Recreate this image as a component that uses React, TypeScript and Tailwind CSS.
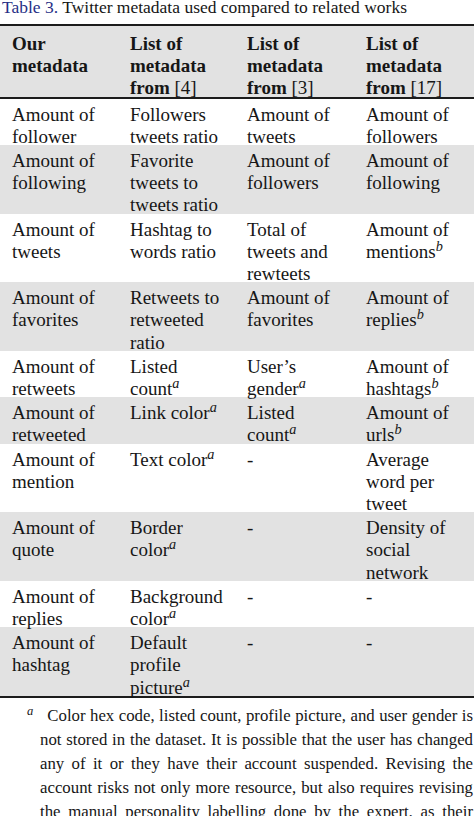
import React from 'react'

type Cell = React.ReactNode[]

const Sup = ({ children }: { children: React.ReactNode }) => (
  <sup className="italic">{children}</sup>
)

const header: Cell[] = [
  ['Our', 'metadata'],
  ['List of', 'metadata', <>from <span className="font-normal">[4]</span></>],
  ['List of', 'metadata', <>from <span className="font-normal">[3]</span></>],
  ['List of', 'metadata', <>from <span className="font-normal">[17]</span></>],
]

const rows: Cell[][] = [
  [['Amount of', 'follower'], ['Followers', 'tweets ratio'], ['Amount of', 'tweets'], ['Amount of', 'followers']],
  [['Amount of', 'following'], ['Favorite', 'tweets to', 'tweets ratio'], ['Amount of', 'followers'], ['Amount of', 'following']],
  [['Amount of', 'tweets'], ['Hashtag to', 'words ratio'], ['Total of', 'tweets and', 'rewteets'], ['Amount of', <>mentions<Sup>b</Sup></>]],
  [['Amount of', 'favorites'], ['Retweets to', 'retweeted', 'ratio'], ['Amount of', 'favorites'], ['Amount of', <>replies<Sup>b</Sup></>]],
  [['Amount of', 'retweets'], ['Listed', <>count<Sup>a</Sup></>], ['User’s', <>gender<Sup>a</Sup></>], ['Amount of', <>hashtags<Sup>b</Sup></>]],
  [['Amount of', 'retweeted'], [<>Link color<Sup>a</Sup></>], ['Listed', <>count<Sup>a</Sup></>], ['Amount of', <>urls<Sup>b</Sup></>]],
  [['Amount of', 'mention'], [<>Text color<Sup>a</Sup></>], ['-'], ['Average', 'word per', 'tweet']],
  [['Amount of', 'quote'], ['Border', <>color<Sup>a</Sup></>], ['-'], ['Density of', 'social', 'network']],
  [['Amount of', 'replies'], ['Background', <>color<Sup>a</Sup></>], ['-'], ['-']],
  [['Amount of', 'hashtag'], ['Default', 'profile', <>picture<Sup>a</Sup></>], ['-'], ['-']],
]

const footnote = [
  'not stored in the dataset. It is possible that the user has changed',
  'any of it or they have their account suspended. Revising the',
  'account risks not only more resource, but also requires revising',
  'the manual personality labelling done by the expert, as their',
]

function Lines({ lines }: { lines: Cell }) {
  return (
    <div className="-mb-[3px] whitespace-nowrap leading-[22.2px]">
      {lines.map((l, i) => (
        <div key={i}>{l}</div>
      ))}
    </div>
  )
}

export default function App() {
  return (
    <div className="h-[816px] w-[474px] overflow-hidden bg-white font-['Liberation_Serif',serif] text-[#161616]">
      <div className="-mt-[4px] whitespace-nowrap pl-[2px] text-[17.5px] leading-[22px]">
        <span className="text-[#262f86]">Table 3.</span> Twitter metadata used compared to related works
      </div>

      <div className="mt-[6px] border-t-2 border-[#1c1c1c] text-[19px]">
        <div className="grid grid-cols-[118px_117px_119px_1fr] border-b-2 border-[#1c1c1c] bg-[#e2e2e2] font-bold">
          {header.map((c, i) => (
            <div key={i} className="pl-3 pt-[7px]">
              <Lines lines={c} />
            </div>
          ))}
        </div>
        {rows.map((r, ri) => (
          <div
            key={ri}
            className={
              'grid grid-cols-[118px_117px_119px_1fr] ' + (ri % 2 === 1 ? 'bg-[#e2e2e2]' : 'bg-white')
            }
          >
            {r.map((c, ci) => (
              <div key={ci} className="pl-3 pt-[5px]">
                <Lines lines={c} />
              </div>
            ))}
          </div>
        ))}
        <div className="border-b-2 border-[#1c1c1c]" />
      </div>

      <div className="mt-[6px] pr-px text-[16.8px] leading-[24px]">
        <div className="whitespace-nowrap pl-[27px] [text-align-last:justify]">
          <sup className="mr-[14px] italic">a</sup>Color hex code, listed count, profile picture, and user gender is
        </div>
        {footnote.map((l, i) => (
          <div key={i} className="whitespace-nowrap pl-[40px] [text-align-last:justify]">
            {l}
          </div>
        ))}
      </div>
    </div>
  )
}
